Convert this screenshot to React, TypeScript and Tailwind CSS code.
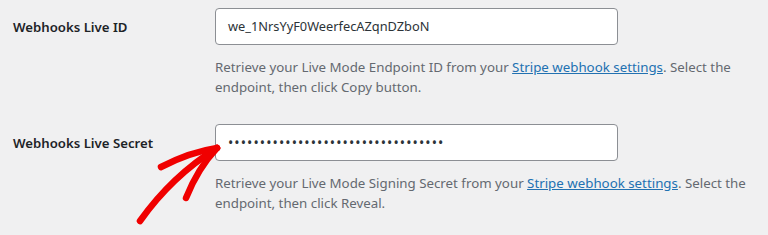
import React from "react";

function Arrow() {
  return (
    <svg
      className="absolute left-0 top-0 pointer-events-none"
      width="768"
      height="235"
      viewBox="0 0 768 235"
    >
      <g stroke="#f00000" strokeWidth="6.5" strokeLinecap="round" strokeLinejoin="round" fill="none">
        <path d="M140 221 Q 172 176 217 148" />
        <path d="M161 167 Q 190 152 217 148" />
        <path d="M186 198 Q 198 168 217 148" />
      </g>
    </svg>
  );
}

function Row({
  label,
  children,
  desc,
  className,
}: {
  label: string;
  children: React.ReactNode;
  desc: React.ReactNode;
  className?: string;
}) {
  return (
    <div className={"flex " + (className ?? "")}>
      <div className="w-[202px] shrink-0 pt-[9px] text-[13.2px] leading-[20px] font-semibold text-[#1d2327]">
        {label}
      </div>
      <div className="flex flex-col">
        {children}
        <div className="mt-[12px] w-[540px] text-[13.3px] leading-[20px] text-[#646970]">{desc}</div>
      </div>
    </div>
  );
}

export default function App() {
  return (
    <div
      className="relative w-[768px] h-[235px] overflow-hidden bg-[#f0f0f1] pl-[13px] pt-[8px]"
      style={{ fontFamily: '"Noto Sans", "Open Sans", sans-serif' }}
    >
      <Row
        label="Webhooks Live ID"
        desc={
          <>
            Retrieve your Live Mode Endpoint ID from your{" "}
            <a className="text-[#2271b1] underline">Stripe webhook settings</a>. Select the endpoint, then click Copy
            button.
          </>
        }
      >
        <div className="flex h-[37px] w-[403px] items-center rounded-[4px] border border-[#8c8f94] bg-white px-[12px] text-[12.8px] text-[#2c3338]">
          we_1NrsYyF0WeerfecAZqnDZboN
        </div>
      </Row>
      <Row
        className="mt-[27px]"
        label="Webhooks Live Secret"
        desc={
          <>
            Retrieve your Live Mode Signing Secret from your{" "}
            <a className="text-[#2271b1] underline">Stripe webhook settings</a>. Select the endpoint, then click Reveal.
          </>
        }
      >
        <div className="flex h-[37px] w-[403px] items-center rounded-[4px] border border-[#8c8f94] bg-white px-[12px] text-[14px] text-[#2c3338] tracking-[1.1px]">
          {"•".repeat(34)}
        </div>
      </Row>
      <Arrow />
    </div>
  );
}
